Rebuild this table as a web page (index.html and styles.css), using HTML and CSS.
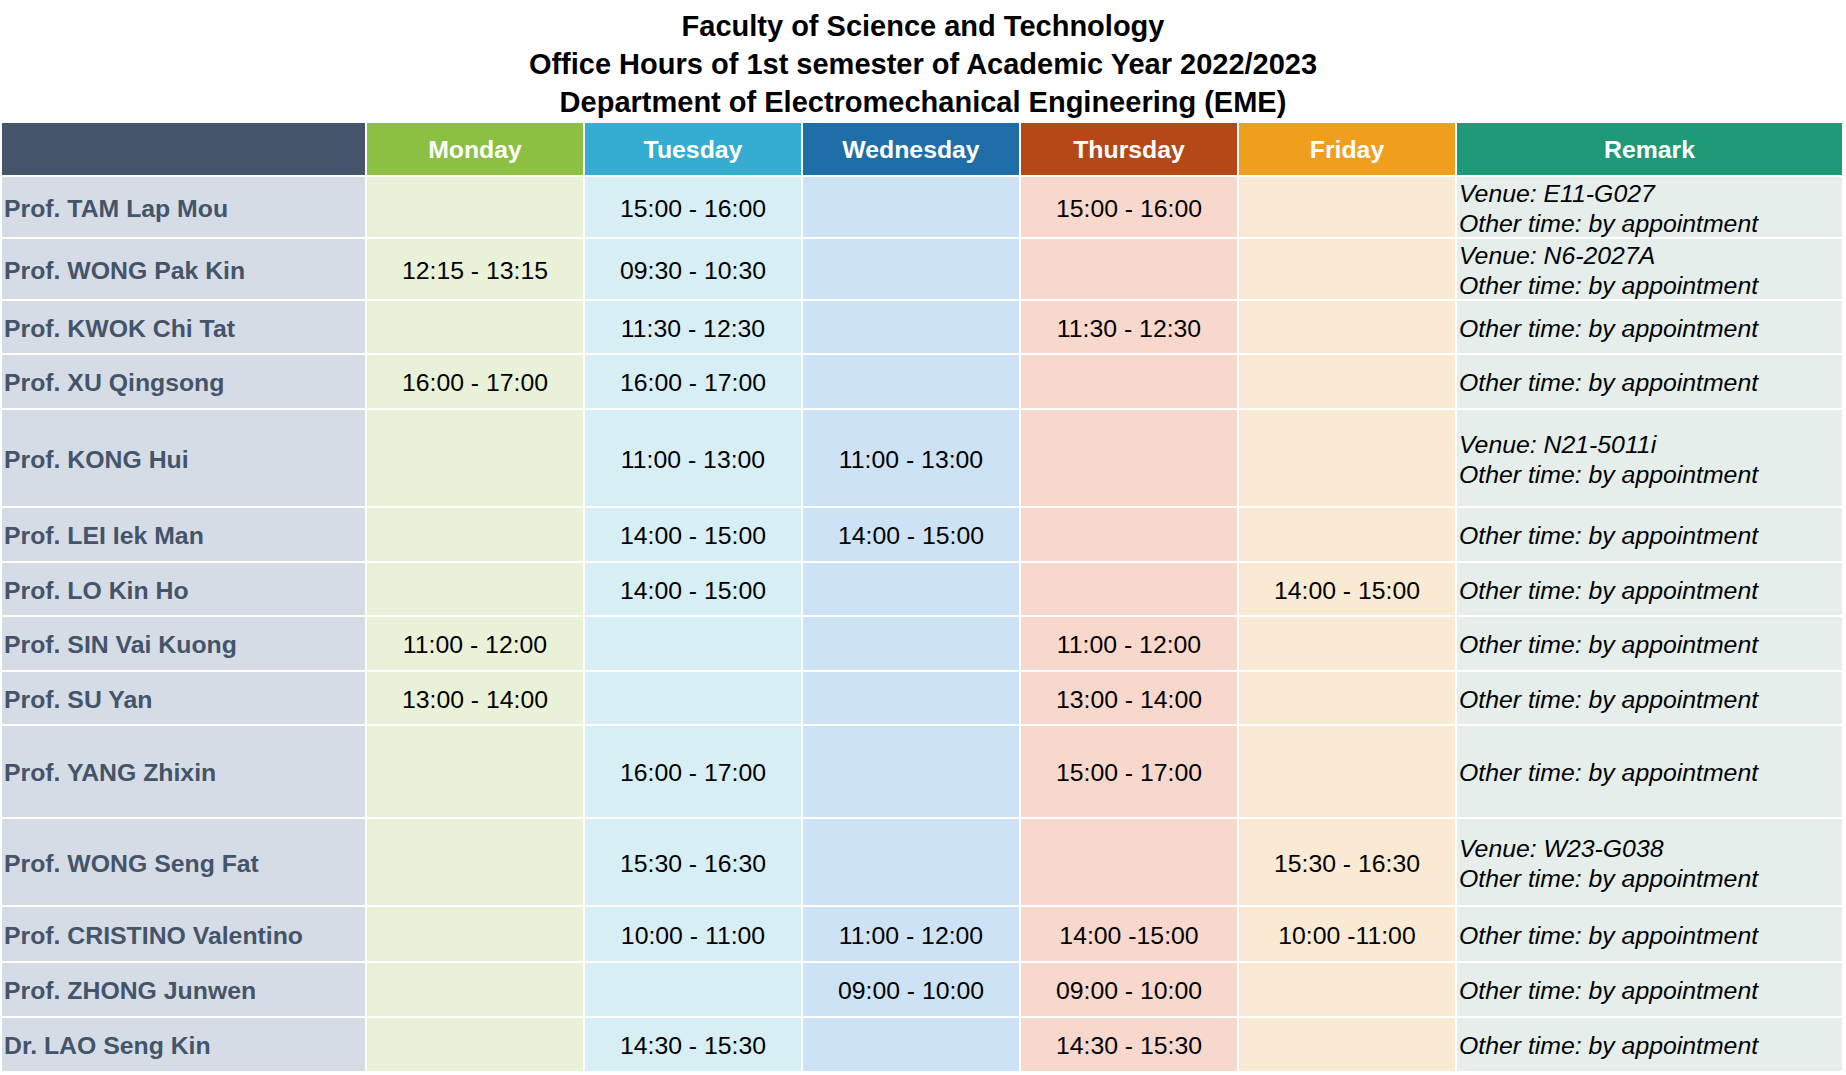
FILE: index.html
```html
<!DOCTYPE html>
<html lang="en">
<head>
<meta charset="utf-8">
<title>Office Hours - EME</title>
<link rel="stylesheet" href="styles.css">
</head>
<body>
<div class="page">
  <header class="title">
    <div>Faculty of Science and Technology</div>
    <div>Office Hours of 1st semester of Academic Year 2022/2023</div>
    <div>Department of Electromechanical Engineering (EME)</div>
  </header>
  <div class="grid">
    <div class="th th-name"></div>
    <div class="th th-mon">Monday</div>
    <div class="th th-tue">Tuesday</div>
    <div class="th th-wed">Wednesday</div>
    <div class="th th-thu">Thursday</div>
    <div class="th th-fri">Friday</div>
    <div class="th th-rem">Remark</div>

    <div class="td name">Prof. TAM Lap Mou</div>
    <div class="td mon"></div>
    <div class="td tue">15:00 - 16:00</div>
    <div class="td wed"></div>
    <div class="td thu">15:00 - 16:00</div>
    <div class="td fri"></div>
    <div class="td rem"><span>Venue: E11-G027</span><span>Other time: by appointment</span></div>

    <div class="td name">Prof. WONG Pak Kin</div>
    <div class="td mon">12:15 - 13:15</div>
    <div class="td tue">09:30 - 10:30</div>
    <div class="td wed"></div>
    <div class="td thu"></div>
    <div class="td fri"></div>
    <div class="td rem"><span>Venue: N6-2027A</span><span>Other time: by appointment</span></div>

    <div class="td name">Prof. KWOK Chi Tat</div>
    <div class="td mon"></div>
    <div class="td tue">11:30 - 12:30</div>
    <div class="td wed"></div>
    <div class="td thu">11:30 - 12:30</div>
    <div class="td fri"></div>
    <div class="td rem"><span>Other time: by appointment</span></div>

    <div class="td name">Prof. XU Qingsong</div>
    <div class="td mon">16:00 - 17:00</div>
    <div class="td tue">16:00 - 17:00</div>
    <div class="td wed"></div>
    <div class="td thu"></div>
    <div class="td fri"></div>
    <div class="td rem"><span>Other time: by appointment</span></div>

    <div class="td name">Prof. KONG Hui</div>
    <div class="td mon"></div>
    <div class="td tue">11:00 - 13:00</div>
    <div class="td wed">11:00 - 13:00</div>
    <div class="td thu"></div>
    <div class="td fri"></div>
    <div class="td rem"><span>Venue: N21-5011i</span><span>Other time: by appointment</span></div>

    <div class="td name">Prof. LEI Iek Man</div>
    <div class="td mon"></div>
    <div class="td tue">14:00 - 15:00</div>
    <div class="td wed">14:00 - 15:00</div>
    <div class="td thu"></div>
    <div class="td fri"></div>
    <div class="td rem"><span>Other time: by appointment</span></div>

    <div class="td name">Prof. LO Kin Ho</div>
    <div class="td mon"></div>
    <div class="td tue">14:00 - 15:00</div>
    <div class="td wed"></div>
    <div class="td thu"></div>
    <div class="td fri">14:00 - 15:00</div>
    <div class="td rem"><span>Other time: by appointment</span></div>

    <div class="td name">Prof. SIN Vai Kuong</div>
    <div class="td mon">11:00 - 12:00</div>
    <div class="td tue"></div>
    <div class="td wed"></div>
    <div class="td thu">11:00 - 12:00</div>
    <div class="td fri"></div>
    <div class="td rem"><span>Other time: by appointment</span></div>

    <div class="td name">Prof. SU Yan</div>
    <div class="td mon">13:00 - 14:00</div>
    <div class="td tue"></div>
    <div class="td wed"></div>
    <div class="td thu">13:00 - 14:00</div>
    <div class="td fri"></div>
    <div class="td rem"><span>Other time: by appointment</span></div>

    <div class="td name">Prof. YANG Zhixin</div>
    <div class="td mon"></div>
    <div class="td tue">16:00 - 17:00</div>
    <div class="td wed"></div>
    <div class="td thu">15:00 - 17:00</div>
    <div class="td fri"></div>
    <div class="td rem"><span>Other time: by appointment</span></div>

    <div class="td name">Prof. WONG Seng Fat</div>
    <div class="td mon"></div>
    <div class="td tue">15:30 - 16:30</div>
    <div class="td wed"></div>
    <div class="td thu"></div>
    <div class="td fri">15:30 - 16:30</div>
    <div class="td rem"><span>Venue: W23-G038</span><span>Other time: by appointment</span></div>

    <div class="td name">Prof. CRISTINO Valentino</div>
    <div class="td mon"></div>
    <div class="td tue">10:00 - 11:00</div>
    <div class="td wed">11:00 - 12:00</div>
    <div class="td thu">14:00 -15:00</div>
    <div class="td fri">10:00 -11:00</div>
    <div class="td rem"><span>Other time: by appointment</span></div>

    <div class="td name">Prof. ZHONG Junwen</div>
    <div class="td mon"></div>
    <div class="td tue"></div>
    <div class="td wed">09:00 - 10:00</div>
    <div class="td thu">09:00 - 10:00</div>
    <div class="td fri"></div>
    <div class="td rem"><span>Other time: by appointment</span></div>

    <div class="td name">Dr. LAO Seng Kin</div>
    <div class="td mon"></div>
    <div class="td tue">14:30 - 15:30</div>
    <div class="td wed"></div>
    <div class="td thu">14:30 - 15:30</div>
    <div class="td fri"></div>
    <div class="td rem"><span>Other time: by appointment</span></div>
  </div>
</div>
</body>
</html>
```

FILE: styles.css
```css
html, body {
  margin: 0;
  padding: 0;
  background: #ffffff;
}

body {
  font-family: "Liberation Sans", Arial, sans-serif;
  color: #000000;
}

.page {
  padding: 0 2px;
}

.title {
  padding-top: 7px;
  margin-bottom: 2px;
  text-align: center;
  font-weight: bold;
  font-size: 29px;
  line-height: 38px;
}

.grid {
  display: grid;
  width: 1840px;
  grid-template-columns: 363px repeat(5, 216px) 385px;
  grid-template-rows: 52px 60px 60px 52px 53px 96px 53px 52px 53px 52px 91px 86px 54px 53px 53px;
  gap: 2px;
  font-size: 24.8px;
}

.th {
  display: flex;
  align-items: center;
  justify-content: center;
  padding-top: 2px;
  color: #ffffff;
  font-weight: bold;
}

.th-name { background: #44546a; }
.th-mon  { background: #8cc043; }
.th-tue  { background: #35add0; }
.th-wed  { background: #1f6ea8; }
.th-thu  { background: #b54819; }
.th-fri  { background: #f09e1e; }
.th-rem  { background: #1f9a78; }

.td {
  display: flex;
  align-items: center;
  justify-content: center;
  padding-top: 3px;
}

.name {
  justify-content: flex-start;
  padding-left: 2px;
  background: #d6dce5;
  color: #44546a;
  font-weight: bold;
}

.mon { background: #e9f2d9; }
.tue { background: #d8eef5; }
.wed { background: #cde2f4; }
.thu { background: #f8d8cc; }
.fri { background: #fbead3; }

.rem {
  flex-direction: column;
  align-items: flex-start;
  justify-content: center;
  padding-left: 2px;
  background: #e5eeeb;
  font-style: italic;
  line-height: 29.5px;
}
```
